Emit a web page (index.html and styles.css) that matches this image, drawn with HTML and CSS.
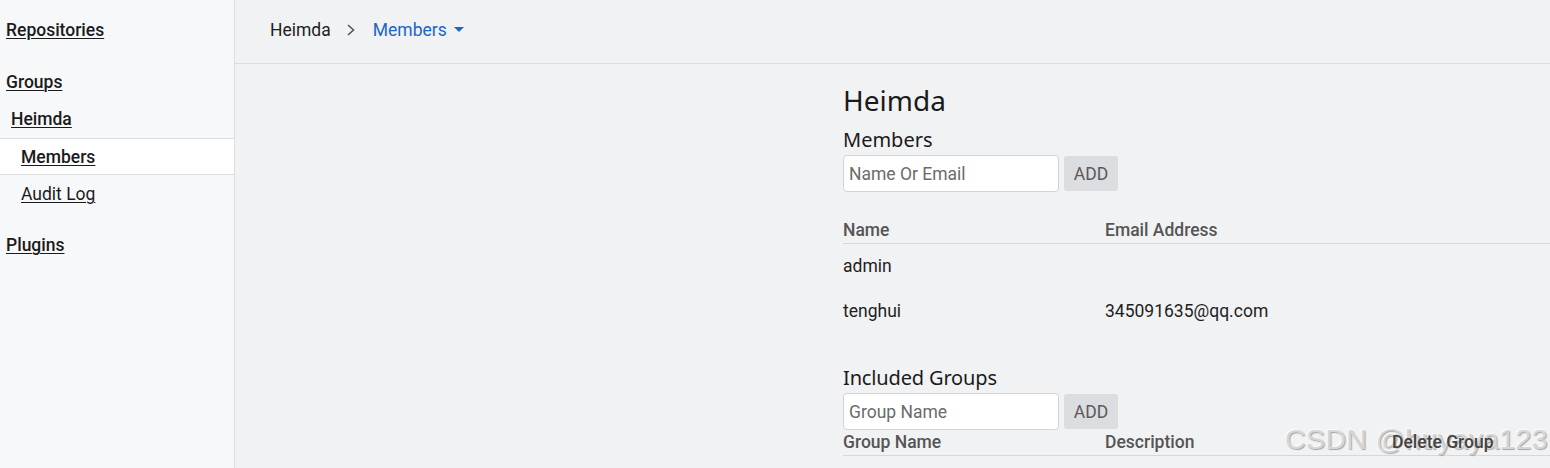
FILE: index.html
```html
<!DOCTYPE html>
<html>
<head>
<meta charset="utf-8">
<link rel="stylesheet" href="styles.css">
</head>
<body>
<div class="app">
  <nav class="sidebar">
    <a class="nav-top" href="#">Repositories</a>
    <a class="nav-top groups" href="#">Groups</a>
    <a class="nav-group" href="#">Heimda</a>
    <a class="nav-sub active" href="#">Members</a>
    <a class="nav-sub plain" href="#">Audit Log</a>
    <a class="nav-top plugins" href="#">Plugins</a>
  </nav>
  <main class="main">
    <header class="topbar">
      <span class="crumb">Heimda</span>
      <svg class="chev" width="10" height="14" viewBox="0 0 10 14"><path d="M2 2 L7.5 7 L2 12" fill="none" stroke="#555" stroke-width="1.6"/></svg>
      <span class="crumb current">Members<svg class="caret" width="10" height="6" viewBox="0 0 10 6"><path d="M0 0 H10 L5 5 Z" fill="#1a66c9"/></svg></span>
    </header>
    <section class="content">
      <h1 class="title">Heimda</h1>
      <h2 class="sub">Members</h2>
      <div class="add-row">
        <input class="field" type="text" placeholder="Name Or Email">
        <button class="add-btn">ADD</button>
      </div>
      <table class="tbl members">
        <thead><tr><th class="c1">Name</th><th>Email Address</th></tr></thead>
        <tbody>
          <tr><td>admin</td><td></td></tr>
          <tr><td>tenghui</td><td>345091635@qq.com</td></tr>
        </tbody>
      </table>
      <h2 class="sub groups-h">Included Groups</h2>
      <div class="add-row">
        <input class="field" type="text" placeholder="Group Name">
        <button class="add-btn">ADD</button>
      </div>
      <table class="tbl groups-tbl">
        <thead><tr><th class="c1">Group Name</th><th class="c2">Description</th><th class="c3"><span class="over">Delete Group</span></th></tr></thead>
      </table>
    </section>
  </main>
</div>
<div class="watermark">CSDN @huyaya123</div>
</body>
</html>
```

FILE: styles.css
```css
html, body {
  margin: 0;
  padding: 0;
  height: 100%;
  overflow: hidden;
}
body {
  font-family: Roboto, "Liberation Sans", sans-serif;
  color: #1e1e1e;
  background: #f1f2f4;
}
.app {
  display: flex;
  height: 468px;
}
.sidebar {
  width: 234px;
  flex: none;
  background: #f7f8fa;
  border-right: 1px solid #dcdde0;
  display: flex;
  flex-direction: column;
  padding-top: 12px;
  box-sizing: content-box;
}
.sidebar a {
  color: #1b1b1b;
  font-size: 17.5px;
  line-height: 36px;
  text-decoration: underline;
  text-underline-offset: 2px;
  text-decoration-thickness: 1px;
  font-weight: 500;
  display: block;
  height: 37px;
  box-sizing: border-box;
}
.nav-top { padding-left: 6px; }
.groups { margin-top: 15px; }
.nav-group { padding-left: 11px; }
.nav-sub { padding-left: 21px; border-top: 1px solid transparent; }
.nav-sub.active {
  background: #ffffff;
  border-top: 1px solid #dcdde0;
  border-bottom: 1px solid #dcdde0;
}
.nav-sub.plain { font-weight: 400 !important; }
.plugins { margin-top: 15px; }

.main {
  flex: 1;
  display: flex;
  flex-direction: column;
  min-width: 0;
}
.topbar {
  height: 64px;
  box-sizing: border-box;
  border-bottom: 1px solid #dcdde0;
  display: flex;
  align-items: center;
  padding-left: 35px;
  padding-bottom: 4px;
  font-size: 17.5px;
}
.crumb { color: #1e1e1e; }
.chev { margin: 0 17px 0 15px; }
.crumb.current {
  color: #1a66c9;
  display: flex;
  align-items: center;
}
.caret { margin-left: 7px; }

.content {
  padding-left: 608px;
  padding-top: 19px;
}
.title {
  font-family: "Noto Sans", "Open Sans", sans-serif;
  font-weight: 400;
  font-size: 28px;
  line-height: 34px;
  margin: 0;
  color: #1a1a1a;
}
.sub {
  font-family: "Noto Sans", "Open Sans", sans-serif;
  font-weight: 400;
  font-size: 20px;
  line-height: 26px;
  margin: 10px 0 2px;
  color: #1a1a1a;
}
.groups-h {
  margin-top: 31px;
  margin-bottom: 2px;
  letter-spacing: -0.15px;
}
.add-row {
  display: flex;
  align-items: center;
  gap: 5px;
}
.field {
  width: 216px;
  height: 37px;
  box-sizing: border-box;
  border: 1px solid #d3d4d6;
  border-radius: 4px;
  background: #fff;
  padding: 0 5px;
  font-family: Roboto, "Liberation Sans", sans-serif;
  font-size: 17.5px;
  color: #333;
  outline: none;
}
.field::placeholder { color: #6b6b6b; }
.add-btn {
  height: 35px;
  width: 54px;
  border: none;
  border-radius: 3px;
  background: #dcdde0;
  color: #5a5a5a;
  font-family: Roboto, "Liberation Sans", sans-serif;
  font-size: 17.5px;
  padding: 0;
}
.tbl {
  width: 100%;
  border-collapse: collapse;
  font-size: 17.5px;
}
.tbl th {
  text-align: left;
  font-weight: 500;
  color: #555;
  padding: 0;
  border-bottom: 1px solid #d6d7da;
}
.members { margin-top: 27px; }
.members th { height: 24px; line-height: 22px; vertical-align: top; }
.members td { padding: 0; height: 46px; vertical-align: middle; color: #1e1e1e; }
.members tbody tr:first-child td { height: 44px; }
.tbl .c1 { width: 262px; }
.groups-tbl { margin-top: 1px; }
.groups-tbl th { height: 24px; line-height: 22px; vertical-align: top; }
.groups-tbl .c2 { width: 287px; }
.groups-tbl .c3 { color: #444; }
.over {
  position: relative;
  z-index: 2;
}

.watermark {
  position: absolute;
  z-index: 1;
  left: 1285px;
  top: 423px;
  font-family: "Liberation Sans", Arial, sans-serif;
  font-size: 28.5px;
  color: #d2d2d2;
  text-shadow: 1px 1px 1px #9a9a9a, -1px -1px 0 #ffffff;
  letter-spacing: 0.4px;
  opacity: 0.85;
  pointer-events: none;
}
```
